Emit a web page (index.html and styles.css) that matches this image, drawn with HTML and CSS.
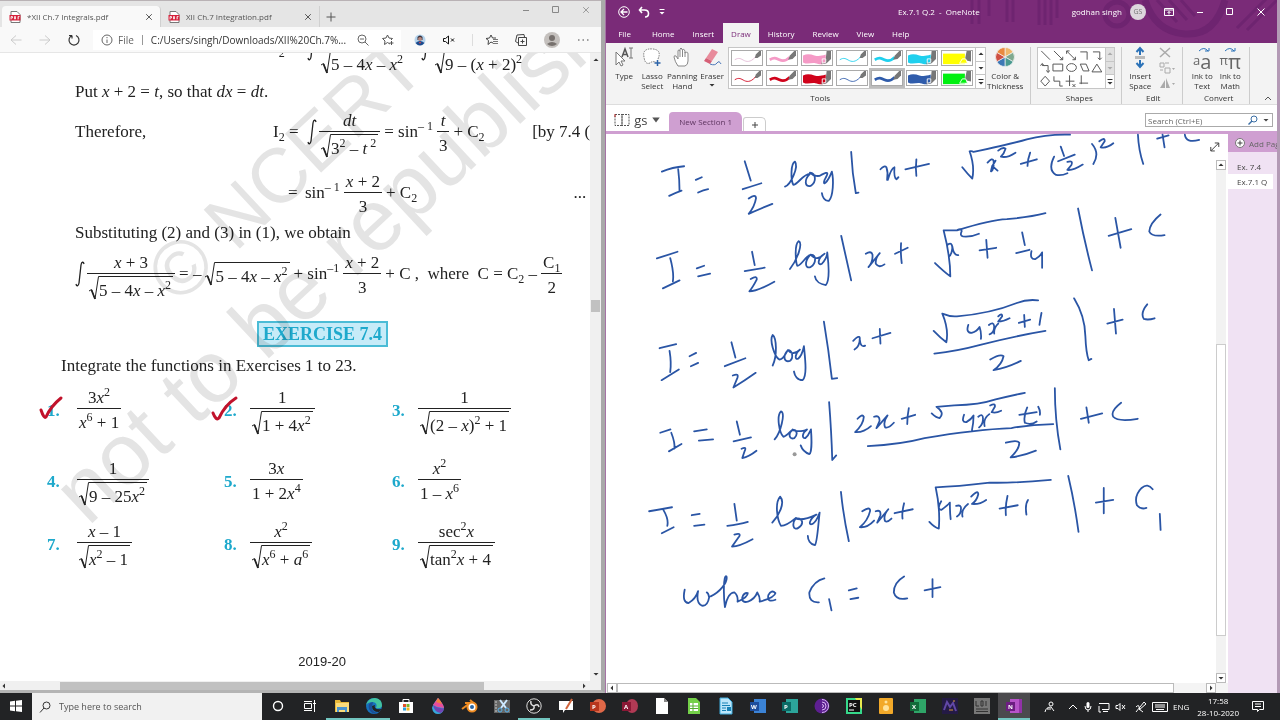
FILE: index.html
```html
<!DOCTYPE html>
<html lang="en">
<head>
<meta charset="utf-8">
<title>Ex.7.1 Q.2 - OneNote</title>
<link rel="stylesheet" href="styles.css">
</head>
<body>
<svg class="defs" aria-hidden="true">
  <symbol id="pdf" viewBox="0 0 12 12"><path d="M2 .5h6L11 3.500V11.500H2z" fill="#fff" stroke="#777"/><path d="M.5 4h11v5.500H.5z" fill="#d6203a"/><path d="M2 8.500v-3h1.500v1.500H2M5.500 5.500v2.500h1V5.500zM9 8.500v-3h1.500M9 7h1" fill="none" stroke="#fff" stroke-width=".8"/></symbol>
  <symbol id="x" viewBox="0 0 10 10"><path d="M1.500 1.500l7 7M8.500 1.500l-7 7" fill="none" stroke="currentColor"/></symbol>
  <symbol id="root" viewBox="0 0 10 24" preserveAspectRatio="none"><path d="M0 15l2.500-1.500L6 23 9.500.5H10" fill="none" stroke="#222"/><path d="M2.500 14L6 23" stroke="#222" stroke-width="1.700"/></symbol>
  <symbol id="integral" viewBox="0 0 10 28"><path d="M9 4C8.500 1.500 6.500 1.500 6 5L4 23c-.5 3.500-2.500 3.500-3 1" fill="none" stroke="#222" stroke-width="1.300"/></symbol>
  <symbol id="fine" viewBox="0 0 32 16"><path d="M2 10c5-3 7-1 11 1s9 1 14-6" fill="none" stroke="currentColor" stroke-width="1"/><path d="M32 0v5l-4 3-3 0 1-4 4-4z" fill="#777"/></symbol>
  <symbol id="medium" viewBox="0 0 32 16"><path d="M2 10c5-3 7-2 11 0s8 1 12-3" fill="none" stroke="currentColor" stroke-width="3"/><path d="M32 0v5l-4 4-5 1 2-5 5-5z" fill="#777"/></symbol>
  <symbol id="broad" viewBox="0 0 32 16"><path d="M0 5c5-2 9-1 13 0s7 1 13-1v10c-5 2-8 1-12 0s-9 2-14-1z" fill="currentColor"/><path d="M32 0v9l-5 5-6 1 1-6h4l1-9z" fill="#777"/><path d="M22 9h4v4l-4 1z" fill="currentColor" stroke="#fff"/></symbol>
  <symbol id="marker" viewBox="0 0 32 16"><path d="M0 3h25v12H0z" fill="currentColor"/><path d="M27 0h5v12l-4-1-3-1z" fill="#777"/><path d="M19 14l3-5h4l2 5z" fill="currentColor" stroke="#fff"/></symbol>
  <symbol id="down" viewBox="0 0 8 8"><path d="M1.500 3h5L4 5.500z" fill="currentColor"/></symbol>
  <symbol id="up" viewBox="0 0 8 8"><path d="M1.500 5h5L4 2.500z" fill="currentColor"/></symbol>
  <symbol id="left" viewBox="0 0 8 8"><path d="M5 1.500v5L2.500 4z" fill="currentColor"/></symbol>
  <symbol id="right" viewBox="0 0 8 8"><path d="M3 1.500v5L5.500 4z" fill="currentColor"/></symbol>
  <symbol id="more" viewBox="0 0 8 8"><path d="M1.500 1.500h5" stroke="currentColor"/><path d="M1.500 4h5L4 6.500z" fill="currentColor"/></symbol>
</svg>

<main class="desktop">
<section class="browser" aria-label="Browser">
  <header class="tabs">
    <div class="tab tab-on"><svg class="i12"><use href="#pdf"/></svg><span class="tab-title">*XII Ch.7 Integrals.pdf</span><button class="plain" aria-label="Close tab"><svg class="i8"><use href="#x"/></svg></button></div>
    <div class="tab"><svg class="i12"><use href="#pdf"/></svg><span class="tab-title">XII Ch.7 Integration.pdf</span><button class="plain" aria-label="Close tab"><svg class="i8"><use href="#x"/></svg></button></div>
    <button class="plain newtab" aria-label="New tab"><svg class="i10" viewBox="0 0 10 10"><path d="M5 .5v9M.5 5h9" stroke="#555"/></svg></button>
    <div class="winbtns">
      <button class="plain" aria-label="Minimize"><svg class="i8" viewBox="0 0 8 8"><path d="M1 4.500h6" stroke="#888"/></svg></button>
      <button class="plain" aria-label="Maximize"><svg class="i8" viewBox="0 0 8 8"><path d="M.5.5h6v6h-6z" fill="none" stroke="#888"/></svg></button>
      <button class="plain" aria-label="Close"><svg class="i8"><use href="#x"/></svg></button>
    </div>
  </header>
  <div class="address">
    <div class="nav">
      <button class="plain" aria-label="Back"><svg class="i12" viewBox="0 0 12 12"><path d="M11.500 6H1M6 1.500L1 6l5 4.500" fill="none" stroke="#ccc"/></svg></button>
      <button class="plain" aria-label="Forward"><svg class="i12" viewBox="0 0 12 12"><path d="M.5 6H11M6 1.500L11 6l-5 4.500" fill="none" stroke="#ccc"/></svg></button>
      <button class="plain" aria-label="Refresh"><svg class="i12" viewBox="0 0 12 12"><path d="M4 1.500a5 5 0 1 0 4 0M4 1.500H1M4 1.500v3" fill="none" stroke="#333" stroke-width="1.200"/></svg></button>
    </div>
    <div class="urlbox">
      <svg class="i12" viewBox="0 0 12 12"><circle cx="6" cy="6" r="5" fill="none" stroke="#666"/><path d="M6 5.500V9M6 3v1.200" stroke="#666"/></svg>
      <label for="url">File</label>
      <input id="url" type="text" value="C:/Users/singh/Downloads/XII%20Ch.7%...">
      <button class="plain" aria-label="Zoom out"><svg class="i12" viewBox="0 0 12 12"><circle cx="5" cy="5" r="4" fill="none" stroke="#666"/><path d="M8 8l3.500 3.500M3 5h4" stroke="#666"/></svg></button>
      <button class="plain star" aria-label="Add to favourites"><svg class="i12" viewBox="0 0 12 12"><path d="M8 10L5.500 8.500 2.500 10.500 3 7 .5 4.500 4 4l1.500-3L7 4l3.500.5L9 6M9.500 7v4M7.500 9h4" fill="none" stroke="#555"/></svg></button>
    </div>
    <div class="extras">
      <button class="plain" aria-label="Extension"><svg class="i12" viewBox="0 0 12 12"><circle cx="6" cy="6" r="5.500" fill="#b5d3ec"/><path d="M3.500 6V3Q6 0 8.500 3v3z" fill="#35303c"/><circle cx="6" cy="5" r="2" fill="#b9867a"/><path d="M1.500 9Q6 5 10.500 9 6 14 1.500 9" fill="#1b4b8e"/><path d="M5 8h2l-1 2z" fill="#e44"/></svg></button>
      <button class="plain" aria-label="Mute"><svg class="i12" viewBox="0 0 12 12"><path d="M.5 4.500h2l3-2.500v8l-3-2.500h-2zM8 4.500l3 3M11 4.500l-3 3" fill="none" stroke="#111"/></svg></button>
      <button class="plain rule" aria-label="Favourites"><svg class="i12" viewBox="0 0 12 12"><path d="M7 9L5 8l-3 2.500.5-4L0 4.500 3.500 4 5 1l1.500 3H10" fill="none" stroke="#444"/><path d="M7 5.500h5M7 7.500h5M7 9.500h5" stroke="#777"/></svg></button>
      <button class="plain" aria-label="Collections"><svg class="i12" viewBox="0 0 12 12"><path d="M3.500 3.500h8v8h-8zM3 9L.5 7.500 2 1l7-.5.5 2.500M7.500 5.500v4M5.500 7.500h4" fill="none" stroke="#444"/></svg></button>
      <button class="plain" aria-label="Profile"><svg class="i16" viewBox="0 0 16 16"><circle cx="8" cy="8" r="8" fill="#c4c0bd"/><circle cx="8" cy="6" r="3" fill="#77716e"/><path d="M3 12q5-4 10 0-5 4-10 0" fill="#77716e"/></svg></button>
      <button class="plain" aria-label="Settings and more"><svg class="i12" viewBox="0 0 12 12"><path d="M1 6h1.500M5.500 6H7M10 6h1.500" stroke="#444" stroke-width="1.200"/></svg></button>
    </div>
  </div>

  <div class="viewer">
    <article class="page">
      <div class="row first"><span class="lead">Now consider</span><span class="eq-start">I<sub>2</sub> =</span><svg class="int"><use href="#integral"/></svg><span class="frac"><span class="num"><i>dx</i></span><span class="den"><span class="rad"><svg class="root"><use href="#root"/></svg><span class="radicand">5 – 4<i>x</i> – <i>x</i><sup>2</sup></span></span></span></span><svg class="int second"><use href="#integral"/></svg><span class="frac"><span class="num"><i>dx</i></span><span class="den"><span class="rad"><svg class="root"><use href="#root"/></svg><span class="radicand">9 – (<i>x</i> + 2)<sup>2</sup></span></span></span></span></div>
      <div class="row put"><p>Put <i>x</i> + 2 = <i>t</i>, so that <i>dx</i> = <i>dt</i>.</p></div>
      <div class="row there"><span class="lead">Therefore,</span><span class="eq-start">I<sub>2</sub> =</span><svg class="int"><use href="#integral"/></svg><span class="frac"><span class="num"><i>dt</i></span><span class="den"><span class="rad"><svg class="root"><use href="#root"/></svg><span class="radicand">3<sup>2</sup> – <i>t</i><sup> 2</sup></span></span></span></span><span class="op">= sin<sup>– 1</sup></span><span class="frac"><span class="num"><i>t</i></span><span class="den">3</span></span><span class="op">+ C<sub>2</sub></span><span class="by">[by 7.4 (</span></div>
      <div class="row sinrow"><span class="eq">=</span><span class="op first-op">sin<sup>– 1</sup></span><span class="frac"><span class="num"><i>x</i> + 2</span><span class="den">3</span></span><span class="op">+ C<sub>2</sub></span><span class="dots">...</span></div>
      <div class="row subst"><p>Substituting (2) and (3) in (1), we obtain</p></div>
      <div class="row result"><svg class="int"><use href="#integral"/></svg><span class="frac"><span class="num"><i>x</i> + 3</span><span class="den"><span class="rad"><svg class="root"><use href="#root"/></svg><span class="radicand">5 – 4<i>x</i> – <i>x</i><sup>2</sup></span></span></span></span><span class="op">= –</span><span class="rad solo"><svg class="root"><use href="#root"/></svg><span class="radicand">5 – 4<i>x</i> – <i>x</i><sup>2</sup></span></span><span class="op">+ sin<sup>–1</sup></span><span class="frac"><span class="num"><i>x</i> + 2</span><span class="den">3</span></span><span class="op">+ C ,&nbsp; where &nbsp;C = C<sub>2</sub> –</span><span class="frac"><span class="num">C<sub>1</sub></span><span class="den">2</span></span></div>
      <h2 class="exercise">EXERCISE 7.4</h2>
      <p class="instruct">Integrate the functions in Exercises 1 to 23.</p>
      <ol class="problems">
        <li><b>1.</b><span class="frac"><span class="num">3<i>x</i><sup>2</sup></span><span class="den"><i>x</i><sup>6</sup> + 1</span></span><svg class="tick" viewBox="0 0 24 26"><path d="M2 14Q5 23 7 21 12 10 22 2" fill="none" stroke="#c1122b" stroke-width="3" stroke-linecap="round"/></svg></li>
        <li><b>2.</b><span class="frac"><span class="num">1</span><span class="den"><span class="rad"><svg class="root"><use href="#root"/></svg><span class="radicand">1 + 4<i>x</i><sup>2</sup></span></span></span></span><svg class="tick far" viewBox="0 0 24 26"><path d="M1 17Q4 25 7 22 13 9 24 2" fill="none" stroke="#c1122b" stroke-width="3" stroke-linecap="round"/></svg></li>
        <li><b>3.</b><span class="frac"><span class="num">1</span><span class="den"><span class="rad"><svg class="root"><use href="#root"/></svg><span class="radicand">(2 – <i>x</i>)<sup>2</sup> + 1</span></span></span></span></li>
        <li><b>4.</b><span class="frac"><span class="num">1</span><span class="den"><span class="rad"><svg class="root"><use href="#root"/></svg><span class="radicand">9 – 25<i>x</i><sup>2</sup></span></span></span></span></li>
        <li><b>5.</b><span class="frac"><span class="num">3<i>x</i></span><span class="den">1 + 2<i>x</i><sup>4</sup></span></span></li>
        <li><b>6.</b><span class="frac"><span class="num"><i>x</i><sup>2</sup></span><span class="den">1 – <i>x</i><sup>6</sup></span></span></li>
        <li><b>7.</b><span class="frac"><span class="num"><i>x</i> – 1</span><span class="den"><span class="rad"><svg class="root"><use href="#root"/></svg><span class="radicand"><i>x</i><sup>2</sup> – 1</span></span></span></span></li>
        <li><b>8.</b><span class="frac"><span class="num"><i>x</i><sup>2</sup></span><span class="den"><span class="rad"><svg class="root"><use href="#root"/></svg><span class="radicand"><i>x</i><sup>6</sup> + <i>a</i><sup>6</sup></span></span></span></span></li>
        <li><b>9.</b><span class="frac"><span class="num">sec<sup>2</sup><i>x</i></span><span class="den"><span class="rad"><svg class="root"><use href="#root"/></svg><span class="radicand">tan<sup>2</sup><i>x</i> + 4</span></span></span></span></li>
      </ol>
      <footer class="folio">2019-20</footer>
      <svg class="watermark" viewBox="0 53 590 628" aria-hidden="true"><text transform="translate(178 306) rotate(-43)" font-size="77">© NCERT</text><text transform="translate(88 527) rotate(-43)" font-size="87">not to be republished</text></svg>
    </article>
    <div class="vbar"><svg class="i8"><use href="#up"/></svg><span class="vtrack"><span class="vthumb"></span></span><svg class="i8"><use href="#down"/></svg></div>
  </div>
  <div class="hbar"><svg class="i8"><use href="#left"/></svg><span class="htrack"><span class="hthumb"></span></span><svg class="i8"><use href="#right"/></svg></div>
</section>

<section class="note" aria-label="OneNote">
  <header class="title">
    <svg class="deco" viewBox="0 0 320 43" preserveAspectRatio="xMaxYMin slice" aria-hidden="true"><g fill="none" stroke="#6e2470"><path d="M15 0v24M22 0v24M32 0v16M50 0v22M56 0v22M82 0v25M88 0v25M94 0v25M100 0v18" stroke-width="3"/><circle cx="160" cy="14" r="12" stroke-width="5"/><path d="M188 0q10 32 40 34t40-34" stroke-width="7"/><path d="M200 0l20 22M212 0l18 20M224 0l14 16M280 28l30-30M290 30l30-30" stroke-width="3"/></g></svg>
    <div class="quick">
      <button class="plain" aria-label="Back"><svg class="i12" viewBox="0 0 12 12"><circle cx="6" cy="6" r="5.300" fill="none" stroke="#fff"/><path d="M9.500 6H3M6 3L3 6l3 3" fill="none" stroke="#fff" stroke-width="1.300"/></svg></button>
      <button class="plain" aria-label="Undo"><svg class="i12" viewBox="0 0 12 12"><path d="M4 1L1.500 4 4 7M1.500 4h5q4 0 4 3.500T7 11" fill="none" stroke="#fff" stroke-width="1.600"/></svg></button>
      <button class="plain" aria-label="Customize"><svg class="i8"><use href="#more"/></svg></button>
    </div>
    <h1>Ex.7.1 Q.2&nbsp; -&nbsp; OneNote</h1>
    <div class="account"><span>godhan singh</span><span class="initials">GS</span></div>
    <div class="controls">
      <button class="plain" aria-label="Ribbon display"><svg class="i10" viewBox="0 0 10 10"><path d="M.5 1.500h9v7h-9zM.5 3h9M5 7.500V4.500M3.500 6L5 4.500 6.500 6" fill="none" stroke="#fff"/></svg></button>
      <button class="plain" aria-label="Minimize"><svg class="i8" viewBox="0 0 8 8"><path d="M1 4.500h6" stroke="#fff"/></svg></button>
      <button class="plain" aria-label="Maximize"><svg class="i8" viewBox="0 0 8 8"><path d="M.5.5h6v6h-6z" fill="none" stroke="#fff"/></svg></button>
      <button class="plain" aria-label="Close"><svg class="i10"><use href="#x"/></svg></button>
    </div>
    <nav class="menu"><button>File</button><button>Home</button><button>Insert</button><button class="on">Draw</button><button>History</button><button>Review</button><button>View</button><button>Help</button></nav>
  </header>

  <div class="ribbon">
    <div class="group tools">
      <div class="items">
        <button class="big w28"><svg class="i20" viewBox="0 0 20 20"><path d="M2 5v13l3-3 2 4 2-1-2-4h4z" fill="#fff" stroke="#777"/><path d="M8 10l3-8 3 8M9 7.500h4" fill="none" stroke="#555" stroke-width="1.500"/><path d="M15 1h4M17 1v10M15 11h4" stroke="#777" fill="none"/></svg>Type</button>
        <button class="big w28"><svg class="i20" viewBox="0 0 20 20"><path d="M16 12Q20 3 11 2 0 1 2 10q1 8 6 6 2-2 6-1" fill="#fff" stroke="#777" stroke-dasharray="1.500 1"/><path d="M15.500 13v6M12.500 16h6" stroke="#2b63a8" stroke-width="1.500"/></svg>Lasso<br>Select</button>
        <button class="big w34"><svg class="i20" viewBox="0 0 20 20"><path d="M6 19Q3 15 2 10q0-2 2-1l2 3V4q0-2 2 0V2q1-2 2 0v1q2-2 3 1v2q3-2 3 1v7q0 4-3 5zM8 4v6M10.500 3v7M13 5v5" fill="#fff" stroke="#888"/></svg>Panning<br>Hand</button>
        <button class="big w28"><svg class="i20" viewBox="0 0 20 20"><path d="M10 2l6 3-6 9-6-3z" fill="#e88b9b"/><path d="M4 11l6 3-2 3-6-3z" fill="#d65f76"/><path d="M8 17q5 2 7-1t4 1" fill="none" stroke="#4a76b8"/></svg>Eraser<svg class="i8"><use href="#down"/></svg></button>
        <div class="gallery">
          <div class="pens">
            <button class="pen pale"><svg><use href="#fine"/></svg></button><button class="pen pink"><svg><use href="#medium"/></svg></button><button class="pen pink"><svg><use href="#broad"/></svg></button><button class="pen cyan"><svg><use href="#fine"/></svg></button><button class="pen cyan"><svg><use href="#medium"/></svg></button><button class="pen cyan"><svg><use href="#broad"/></svg></button><button class="pen yellow"><svg><use href="#marker"/></svg></button>
            <button class="pen red"><svg><use href="#fine"/></svg></button><button class="pen red"><svg><use href="#medium"/></svg></button><button class="pen red"><svg><use href="#broad"/></svg></button><button class="pen blue"><svg><use href="#fine"/></svg></button><button class="pen blue picked"><svg><use href="#medium"/></svg></button><button class="pen blue"><svg><use href="#broad"/></svg></button><button class="pen green"><svg><use href="#marker"/></svg></button>
          </div>
          <div class="spin"><button aria-label="Up"><svg class="i8"><use href="#up"/></svg></button><button aria-label="Down"><svg class="i8"><use href="#down"/></svg></button><button aria-label="More"><svg class="i8"><use href="#more"/></svg></button></div>
        </div>
        <button class="big w38"><svg class="i20" viewBox="-10 -10 20 20"><g stroke="#f3f3f3" stroke-width=".7"><path d="M0 0V-9.500A9.500 9.500 0 0 1 8.200-4.700z" fill="#efb76b"/><path d="M0 0L8.200-4.700A9.500 9.500 0 0 1 8.200 4.700z" fill="#7fa98f"/><path d="M0 0L8.200 4.700A9.500 9.500 0 0 1 0 9.500z" fill="#4a9a90"/><path d="M0 0V9.500A9.500 9.500 0 0 1-8.200 4.700z" fill="#3d78b5"/><path d="M0 0L-8.200 4.700A9.500 9.500 0 0 1-8.200-4.700z" fill="#cf4f42"/><path d="M0 0L-8.200-4.700A9.500 9.500 0 0 1 0-9.500z" fill="#e9893f"/></g></svg>Color &amp;<br>Thickness</button>
      </div>
      <div class="caption">Tools</div>
    </div>
    <div class="group shapes">
      <div class="items"><div class="shapebox">
        <svg viewBox="0 0 68 41" aria-label="Shapes"><g fill="none" stroke="#555"><path d="M3 3l9 9M16 3l9 9M25 9v3h-3M29 3l9 9M29 6V3h3M38 9v3h-3M43 4h7v8M56 4h7v8M61 10l2 2 2-2M4 16v2h6v7M8 23l2 2 2-2M2 18l2-2 2 2M15 16.500h10v7H15zM43 16.500h6l3 7h-6zM60 16.500l5 8H55zM7 29l4.500 5L7 39l-4.500-5zM16 29v5h6v5h3M32 28v11M28 34h9M44 28v9M42 36h9M35 37l3 3M38 37l-3 3"/><ellipse cx="34" cy="20" rx="5" ry="4"/></g></svg>
        <div class="spin"><button aria-label="Up" disabled><svg class="i8"><use href="#up"/></svg></button><button aria-label="Down" disabled><svg class="i8"><use href="#down"/></svg></button><button aria-label="More"><svg class="i8"><use href="#more"/></svg></button></div>
      </div></div>
      <div class="caption">Shapes</div>
    </div>
    <div class="group edit">
      <div class="items">
        <button class="big w34"><svg class="i20" viewBox="0 0 20 20"><path d="M5 9h10v3H5z" fill="#bbb"/><path d="M10 8V2M6.500 5L10 1l3.500 4M10 13v6M6.500 16L10 20l3.500-4" fill="none" stroke="#2b72b8" stroke-width="2"/></svg>Insert<br>Space</button>
        <div class="mini"><svg class="i12" viewBox="0 0 12 12"><path d="M1 1l10 9M11 1L1 10" stroke="#aaa" stroke-width="1.500"/></svg><svg class="i16" viewBox="0 0 16 12"><path d="M1 1h4v4H1zM6 6h5v5H6zM6 1h4M1 8h3" fill="none" stroke="#aaa"/><path d="M13 6h3l-1.500 2z" fill="#aaa"/></svg><svg class="i16" viewBox="0 0 16 12"><path d="M1 11L6 3v8zM7 11V1l4 10z" fill="#aaa"/><path d="M13 6h3l-1.500 2z" fill="#aaa"/></svg></div>
      </div>
      <div class="caption">Edit</div>
    </div>
    <div class="group convert">
      <div class="items">
        <button class="big w28"><span class="glyph"><small>a</small>a<svg viewBox="0 0 12 6"><path d="M1 4Q6-1 10 4M7 4h4V1" fill="none" stroke="#2b72b8"/></svg></span>Ink to<br>Text</button>
        <button class="big w28"><span class="glyph"><small>π</small>π<svg viewBox="0 0 12 6"><path d="M1 4Q6-1 10 4M7 4h4V1" fill="none" stroke="#2b72b8"/></svg></span>Ink to<br>Math</button>
      </div>
      <div class="caption">Convert</div>
    </div>
    <button class="plain collapse" aria-label="Collapse ribbon"><svg class="i8" viewBox="0 0 8 8"><path d="M1 6l3-3 3 3" fill="none" stroke="#555"/></svg></button>
  </div>

  <div class="sections">
    <button class="book"><svg class="i16" viewBox="0 0 16 14"><path d="M1 1.500h7v11H1zM8 1.500h7v11H8z" fill="#fff" stroke="#555" stroke-dasharray="2 1"/><path d="M1 1v3" stroke="#b22"/></svg><span>gs</span><svg class="i10" viewBox="0 0 8 8"><path d="M1 2h6L4 6z" fill="#555"/></svg></button>
    <button class="sec">New Section 1</button>
    <button class="addsec" aria-label="Add section"><svg class="i8" viewBox="0 0 8 8"><path d="M4 1v6M1 4h6" stroke="#444"/></svg></button>
    <div class="search"><input type="text" aria-label="Search" placeholder="Search (Ctrl+E)"><svg class="i10" viewBox="0 0 10 10"><circle cx="6" cy="4" r="3" fill="none" stroke="#3a6ea5"/><path d="M4 6L.5 9.500" stroke="#3a6ea5" stroke-width="1.500"/></svg><svg class="i8"><use href="#down"/></svg></div>
  </div>

  <div class="work">
    <div class="sheet">
      <svg class="ink" viewBox="605 134 611 548" preserveAspectRatio="xMinYMin meet" role="img" aria-label="Handwritten working for the integral">
        <g transform="translate(600 130) scale(.33333)">
          <path d="M183 125Q215 112 250 109M232 118Q236 150 236 182M205 198Q220 190 242 182M285 150L303 142M292 188Q308 180 322 178M432 94L450 152M426 178Q450 170 482 160M444 206Q465 190 466 205 462 230 444 252 470 240 515 222"/>
          <path d="M553 170C570 165 595 110 583 95 570 100 570 150 578 165 590 165 610 130 628 132 610 150 612 172 630 168 650 155 645 130 628 128 640 140 655 140 662 135 690 120 680 135 672 150 665 170 680 160 694 125 700 150 698 200 685 213 672 215 665 200 664 190M752 66Q755 130 766 190L774 188M840 118Q852 105 858 112 864 130 860 150M862 150Q872 115 882 112 880 145 888 148L894 142M915 118Q950 110 986 102M948 88Q945 115 948 138"/>
          <path d="M168 386L230 366M208 385Q220 430 216 455M186 476L236 452M288 416L310 408M292 440L328 432M454 366L462 406M432 424L492 414M450 448Q470 435 468 450 455 475 446 485 470 485 521 456"/>
          <path d="M568 418C590 390 608 340 594 334 580 345 586 400 590 408 600 410 615 380 628 376 612 395 612 418 630 412 648 400 648 375 630 375 645 392 660 385 672 372 650 385 650 410 664 402 675 390 680 375 680 368 684 400 690 450 676 466 660 464 645 455 643 440M722 318L752 452M796 372Q812 362 816 374 818 398 804 412L838 370Q824 385 826 402 836 416 852 404M884 372L922 354M902 340Q900 370 904 400"/>
          <path d="M176 656L226 644M206 664Q212 700 208 728M182 752L234 720M266 680L286 670M270 710L292 700M392 638L404 684M372 710L434 686M396 738Q415 730 410 745L398 774Q430 755 465 730"/>
          <path d="M516 708C530 680 528 625 516 616 506 630 520 680 536 690 550 690 555 670 562 662 545 680 550 700 568 694 580 684 575 662 562 662 572 675 585 672 598 660 585 670 580 690 592 688 602 680 608 660 610 650 614 690 620 740 606 752 590 752 582 738 580 726M670 576Q684 660 694 748L710 746M758 634Q775 615 778 625 778 650 762 660M778 630Q780 655 794 648M816 626L870 610M838 598L840 642"/>
        </g>
        <g transform="translate(930 130) scale(.33333)">
          <path d="M96 112Q110 130 126 146 134 110 118 64 124 62 130 66 250 40 290 28 350 12 420 14M172 98Q186 82 190 92 192 115 184 124M196 92Q184 108 182 124M186 108L202 122M204 62Q218 50 226 56 222 70 212 80 230 85 256 68M272 102L320 88M300 68Q292 90 292 108M372 80Q352 120 378 135 395 138 412 130M392 50L402 78M384 94L434 74M412 96Q430 90 424 105L412 120Q430 122 458 104M486 42Q510 70 490 102M508 34Q525 20 524 34L512 52Q530 56 550 40M624 14Q626 60 640 102M682 26L716 16M698 14L704 52M765 14Q768 40 808 30"/>
          <path d="M14 400Q40 425 60 440 60 380 40 302L80 302Q180 270 230 268 300 262 346 250M82 300Q95 295 94 305 88 318 98 320 125 322 146 312M52 345Q66 335 66 355 64 375 56 380M66 350Q70 378 84 376M148 362L198 354M168 330L172 384M276 308L284 346M258 370L298 360M304 364Q298 390 316 388 330 380 336 368V414M444 236Q462 330 486 422M536 318Q570 308 604 298M556 264L572 354M692 254Q660 280 658 305 665 322 704 316"/>
          <path d="M10 604Q30 625 48 638 56 600 36 552 60 562 80 560 180 552 260 520 290 508 324 512M114 586Q106 610 124 610 140 605 148 592 154 610 152 628M176 586Q190 575 192 590 192 610 178 614M204 582Q190 595 192 612M204 560Q216 548 216 560L204 576Q220 576 238 566M266 580L300 570M282 556L284 592M334 550Q330 570 328 586M12 672Q80 665 150 646 250 620 346 604M180 690Q210 672 220 680 215 705 190 722 230 715 272 694M432 506Q465 560 466 620 468 670 476 692L484 688M532 582L578 570M552 538L558 612M652 524Q630 550 642 568 655 572 674 566"/>
        </g>
        <g transform="translate(600 380) scale(.39542 .33333)">
          <path d="M150 160L176 150M178 160Q188 190 186 208M172 216L204 194M236 156L268 150M248 184L284 180M344 126L352 166M336 186L380 174M356 208Q370 200 364 215L358 236Q375 232 394 214"/>
          <path d="M440 180C455 160 468 100 456 96 444 110 452 160 462 172 470 172 480 155 486 150 472 165 478 182 490 176 500 165 496 150 486 152 500 158 515 155 522 150 510 160 508 178 518 176 526 168 530 155 532 150 534 180 534 220 528 224 518 220 510 212 506 198M578 68Q584 160 586 242L596 228M650 118Q662 102 666 112 665 135 644 158 665 160 684 140M692 112Q706 106 706 124L698 146 726 108Q714 128 720 144 728 148 742 130M762 118L796 106M780 86Q776 110 776 134M838 102Q850 116 858 116 872 100 850 82L895 78Q960 76 1000 60 1040 48 1074 40M920 106Q912 130 926 128 938 120 944 108 944 130 940 152M956 112Q968 100 968 118 968 136 958 144M984 104Q968 118 972 140M986 78Q1000 70 998 82L990 98Q1000 102 1014 94M1060 106L1104 98M1080 84Q1070 110 1074 130 1090 138 1104 126M1108 82Q1114 95 1112 106M676 200Q760 195 820 176 950 150 1040 146 1090 135 1146 134M1150 26Q1150 120 1164 210M1026 190Q1055 180 1060 190 1060 210 1038 234 1070 230 1102 214M1216 118L1270 102M1230 84L1236 130M1318 70Q1290 95 1298 112 1310 128 1360 118"/>
          <path d="M122 396L180 384M158 392Q172 420 168 440M154 462L184 444M230 408L250 404M236 440L262 436M338 374L344 424M320 440Q350 436 372 428M338 466Q356 460 350 472L332 502Q350 502 384 480"/>
          <path d="M434 430C450 410 468 370 454 352 440 370 446 420 456 440 470 440 485 425 494 416 482 435 488 455 500 446 515 435 512 415 494 418 510 425 530 415 546 406 528 420 524 440 536 434 548 425 552 405 554 400 550 440 548 490 542 498 530 495 524 482 524 470M608 338Q614 410 628 486M662 396Q682 380 682 395 676 425 656 444 675 446 692 424M696 396Q710 390 708 408L700 430 728 390Q714 410 720 426 726 430 736 418M744 402L790 390M768 372Q762 400 764 418M832 428Q845 445 856 448 860 390 848 324 900 322 985 310 1040 312 1140 302M862 366Q850 390 862 392 878 380 884 370 884 400 886 420M900 380Q914 375 912 390 912 405 902 412M930 374Q912 390 916 412M938 352Q956 330 956 345 952 365 940 374 960 376 976 362M1010 388L1056 378M1030 350Q1024 380 1026 408M1082 362Q1074 375 1078 406M1184 290Q1200 370 1210 458M1254 370L1298 362M1274 326V402M1398 330Q1385 310 1370 326 1350 350 1358 378 1368 392 1382 386M1416 404L1418 452"/>
          <path d="M212 632Q205 670 222 672 240 660 246 636 240 672 256 680 270 682 274 655 272 642 268 640M278 652C300 640 322 610 318 592 310 585 310 650 314 684Q322 640 338 640 348 650 346 668 372 655 372 642 362 640 358 655 356 672 372 668 390 660 396 640 404 655 402 668 440 655 442 642 432 630 424 648 420 672 442 662M566 598Q540 605 528 640 526 672 552 670M578 660L584 694M628 634L648 628M632 660L652 656M768 592Q742 610 742 640 748 665 776 658M820 634L860 624M840 600V654"/>
        </g>
        <circle cx="794" cy="455" r="2" fill="#999"/>
        <path class="expand" d="M1211 151l8-8M1215 143h4v4M1211 147v4h4"/>
      </svg>
    </div>
    <div class="nvbar"><svg class="i10 boxed"><use href="#up"/></svg><span class="nvtrack"><span class="nvthumb"></span></span><svg class="i10 boxed"><use href="#down"/></svg></div>
    <aside class="pages">
      <button class="addpage"><svg class="i10" viewBox="0 0 10 10"><circle cx="5" cy="5" r="4.500" fill="#fff" stroke="#777"/><path d="M5 2.500v5M2.500 5h5" stroke="#444"/></svg>Add Page</button>
      <a href="#p1">Ex. 7.4</a>
      <a href="#p2" class="current">Ex.7.1 Q</a>
    </aside>
    <div class="nhbar"><svg class="i10 boxed"><use href="#left"/></svg><span class="nhthumb"></span><svg class="i10 boxed"><use href="#right"/></svg></div>
  </div>
</section>
</main>

<footer class="taskbar">
  <button class="slot" aria-label="Start"><svg class="i12" viewBox="0 0 12 12"><path d="M0 1.500l5-.7v4.700H0zM6 .7L12 0v5.500H6zM0 6.500h5v4.700l-5-.7zM6 6.500h6V12l-6-.7z" fill="#fff"/></svg></button>
  <label class="find"><svg class="i12" viewBox="0 0 12 12"><circle cx="7.500" cy="4.500" r="3.500" fill="none" stroke="#333"/><path d="M5 7L1 11.500" stroke="#333"/></svg><input type="text" aria-label="Search" placeholder="Type here to search"></label>
  <button class="slot" aria-label="Cortana"><svg class="i12" viewBox="0 0 12 12"><circle cx="6" cy="6" r="4.500" fill="none" stroke="#fff" stroke-width="1.400"/></svg></button>
  <button class="slot" aria-label="Task view"><svg class="i12" viewBox="0 0 12 12"><path d="M.5 3.500h7v5h-7zM0 1.500h8M0 10.500h8M10.500 0v12M9 3.500h3" fill="none" stroke="#fff"/></svg></button>
  <button class="slot open" aria-label="Explorer"><svg class="i16" viewBox="0 0 16 16"><path d="M1 2h5l1 2h8v10H1z" fill="#e8b839"/><path d="M2 5h13v9H2z" fill="#fbdc7c"/><path d="M3 14v-5h10v5h-2v-2H5v2z" fill="#4a94cf"/></svg></button>
  <button class="slot open" aria-label="Edge"><svg class="i16" viewBox="0 0 16 16"><circle cx="8" cy="8" r="8" fill="#1671bd"/><path d="M0 7Q2 0 9 0q7 1 7 7 0 4-6 3 2-5-3-6-5 0-7 3" fill="#42c2a0"/><path d="M7 4Q1 5 3 11q3 6 9 4-7-1-6-7z" fill="#1b4f98"/><path d="M9 7q-2 5 7 4l-3 3Q6 14 6 8z" fill="#222"/></svg></button>
  <button class="slot" aria-label="Store"><svg class="i16" viewBox="0 0 16 16"><path d="M1 4h14v11H1z" fill="#fff"/><path d="M5 4V1.500h6V4" fill="none" stroke="#fff"/><path d="M5 6h3v3H5z" fill="#e5502a"/><path d="M8.500 6h3v3h-3z" fill="#7bb52b"/><path d="M5 9.500h3v3H5z" fill="#29a0dc"/><path d="M8.500 9.500h3v3h-3z" fill="#f4b51c"/></svg></button>
  <button class="slot" aria-label="Paint 3D"><svg class="i16" viewBox="0 0 16 16"><path d="M8 0q6 7 6 10-1 6-6 6T2 10Q3 6 8 0" fill="#35a8dd"/><path d="M8 0q6 7 6 10-6 0-11-3z" fill="#e94c9b"/><path d="M3 7q5 4 11 3 0 3-3 5Q4 14 3 7" fill="#7045b5"/><path d="M8 0q3 3 4 6L6 4z" fill="#f2803c"/></svg></button>
  <button class="slot" aria-label="Blender"><svg class="i16" viewBox="0 0 16 16"><path d="M0 11l8-6H3M8 2l6 5" fill="none" stroke="#ee8b22" stroke-width="2"/><circle cx="10" cy="9" r="4.500" fill="#fff" stroke="#ee8b22" stroke-width="2"/><circle cx="10" cy="9" r="2" fill="#2b66a5"/></svg></button>
  <button class="slot" aria-label="Video editor"><svg class="i16" viewBox="0 0 16 16"><path d="M0 2h16v13H0z" fill="#666"/><path d="M1 4h2M1 7h2M1 10h2M1 13h2" stroke="#ccc"/><path d="M6 2l6 8M13 2L7 10" stroke="#cde8ff" stroke-width="2"/><circle cx="6" cy="12" r="2" fill="none" stroke="#56b2ec"/><circle cx="13" cy="12" r="2" fill="none" stroke="#56b2ec"/></svg></button>
  <button class="slot open" aria-label="OBS"><svg class="i16" viewBox="0 0 16 16"><circle cx="8" cy="8" r="7.200" fill="#222" stroke="#ddd"/><path d="M8 8Q4 7 5 3M8 8q4-3 5 1M8 8q1 4-4 4" fill="none" stroke="#ddd" stroke-width="1.500"/></svg></button>
  <button class="slot" aria-label="Whiteboard"><svg class="i16" viewBox="0 0 16 16"><path d="M1 3h14v9H7l-2 3v-3H1z" fill="#fff"/><path d="M8 11l6-10" stroke="#d1633b" stroke-width="2"/></svg></button>
  <button class="slot" aria-label="PowerPoint"><svg class="i16" viewBox="0 0 16 16"><circle cx="9" cy="8" r="7" fill="#e06848"/><rect y="4" width="9" height="9" fill="#b7361d"/><text x="2" y="11" class="ltr">P</text></svg></button>
  <button class="slot" aria-label="Access"><svg class="i16" viewBox="0 0 16 16"><ellipse cx="10" cy="8" rx="6" ry="7" fill="#b13a55"/><rect y="4" width="9" height="9" fill="#8a1835"/><text x="2" y="11" class="ltr">A</text></svg></button>
  <button class="slot" aria-label="LibreOffice"><svg class="i16" viewBox="0 0 16 16"><path d="M2 0h8l4 4v12H2z" fill="#fff"/><path d="M10 0v4h4" fill="#888"/></svg></button>
  <button class="slot" aria-label="Calc"><svg class="i16" viewBox="0 0 16 16"><path d="M2 0h8l4 4v12H2z" fill="#74d049"/><path d="M4 5h8v8H4z" fill="#fff"/><path d="M4 8h8M4 10.500h8M7 5v8" stroke="#53ad30"/></svg></button>
  <button class="slot" aria-label="Writer"><svg class="i16" viewBox="0 0 16 16"><path d="M2 0h8l4 4v12H2z" fill="#bce6fa" stroke="#3baadc"/><path d="M4 5h6M4 7.500h8M4 10h4M4 12.500h4" stroke="#1681b5"/><path d="M9 9h4v4H9z" fill="#1681b5"/></svg></button>
  <button class="slot" aria-label="Word"><svg class="i16" viewBox="0 0 16 16"><rect x="4" y="1" width="12" height="14" fill="#3b83d6"/><rect y="4" width="9" height="9" fill="#1d4d9c"/><text x="1" y="11" class="ltr">W</text></svg></button>
  <button class="slot" aria-label="Publisher"><svg class="i16" viewBox="0 0 16 16"><rect x="4" y="1" width="12" height="14" fill="#2ca59b"/><rect y="4" width="9" height="9" fill="#0b6b66"/><text x="2" y="11" class="ltr">P</text></svg></button>
  <button class="slot" aria-label="Tor"><svg class="i16" viewBox="0 0 16 16"><circle cx="8" cy="8" r="7.500" fill="#5d1f91"/><path d="M8 1.500a6.500 6.500 0 0 1 0 13M8 4a4 4 0 0 1 0 8M8 6.500a1.500 1.500 0 0 1 0 3" fill="none" stroke="#d9b7f5"/></svg></button>
  <button class="slot" aria-label="PyCharm"><svg class="i16" viewBox="0 0 16 16"><path d="M0 0h16v16H0z" fill="#36d98b"/><path d="M9 0h7v12z" fill="#e9e94e"/><rect x="2" y="2" width="12" height="12" fill="#111"/><text x="3" y="9" class="ltr">PC</text><path d="M3 12h5" stroke="#fff"/></svg></button>
  <button class="slot" aria-label="Music"><svg class="i16" viewBox="0 0 16 16"><rect x="1" width="14" height="16" rx="1" fill="#f2a929"/><circle cx="8" cy="10" r="3" fill="#ffe39b"/><circle cx="8" cy="4" r="1.500" fill="#ffe39b"/></svg></button>
  <button class="slot" aria-label="Excel"><svg class="i16" viewBox="0 0 16 16"><rect x="4" y="1" width="12" height="14" fill="#2fa568"/><rect y="4" width="9" height="9" fill="#126b3a"/><text x="2" y="11" class="ltr">X</text></svg></button>
  <button class="slot" aria-label="Game"><svg class="i16" viewBox="0 0 16 16"><rect width="16" height="16" fill="#241a45"/><path d="M2 12l3-8 3 5 3-4 3 8" fill="none" stroke="#6248a7" stroke-width="2"/><path d="M7 12h4M11 3h2" stroke="#db9a3c"/></svg></button>
  <button class="slot" aria-label="Logisim"><svg class="i16" viewBox="0 0 16 16"><rect width="16" height="16" fill="#777"/><path d="M2 3v5h3M7 3h2v5H7zM12 3v5M2 11h12M2 13.500h12" fill="none" stroke="#333"/></svg></button>
  <button class="slot open active" aria-label="OneNote"><svg class="i16" viewBox="0 0 16 16"><rect x="4" y="1" width="12" height="14" fill="#b653c9"/><path d="M13 1h3v14h-3z" fill="#9332a8"/><rect y="4" width="9" height="9" fill="#6d1d82"/><text x="2" y="11" class="ltr">N</text></svg></button>
  <div class="tray">
    <svg class="i12" viewBox="0 0 12 12"><circle cx="7" cy="3" r="2" fill="none" stroke="#fff"/><path d="M1 11q1-5 6-5l3 4M3 8l4 0" fill="none" stroke="#fff"/></svg>
    <svg class="i10" viewBox="0 0 10 10"><path d="M1 7l4-4 4 4" fill="none" stroke="#fff"/></svg>
    <svg class="i10" viewBox="0 0 10 10"><rect x="3.500" width="3" height="6" rx="1.500" fill="#fff"/><path d="M2 4q0 4 3 4t3-4M5 8v2" fill="none" stroke="#fff"/></svg>
    <svg class="i12" viewBox="0 0 12 12"><path d="M1 2.500h10v6H4M1 5v6h2M5 10.500h5" fill="none" stroke="#fff"/></svg>
    <svg class="i12" viewBox="0 0 12 12"><path d="M1 4.500h2l2-2v7l-2-2H1zM7 4l3 4M10 4L7 8" fill="none" stroke="#fff"/></svg>
    <svg class="i12 gap" viewBox="0 0 12 12"><path d="M1 11L9 1l2 2-7 6M1 6q3-3 3 0t4 5" fill="none" stroke="#fff"/></svg>
    <svg class="i16" viewBox="0 0 16 12"><path d="M.5 1.500h15v9H.5zM3 4h10M3 6h10M4 8.500h8" fill="none" stroke="#fff"/></svg>
    <span>ENG</span>
    <time class="clock">17:58<br>28-10-2020</time>
    <svg class="i12" viewBox="0 0 12 12"><path d="M.5.5h11v8h-4l-2 2v-2h-5zM3 3h6M3 5.500h6" fill="none" stroke="#fff"/></svg>
  </div>
</footer>
</body>
</html>
```
FILE: styles.css
```css
* { box-sizing: border-box; }
body { margin: 0; height: 100vh; display: flex; flex-direction: column; overflow: hidden; font-family: "Open Sans", "Noto Sans", sans-serif; font-size: 9px; color: #444; background: #fff; }
button { font: inherit; color: inherit; background: none; border: 0; padding: 0; }
input { font: inherit; color: inherit; background: none; border: 0; padding: 0; min-width: 0; outline: 0; }
svg { display: block; flex: none; overflow: visible; }
.defs { position: absolute; width: 0; height: 0; }
.i8 { width: 8px; height: 8px; }
.i10 { width: 10px; height: 10px; }
.i12 { width: 12px; height: 12px; }
.i16 { width: 16px; height: 16px; }
.i20 { width: 20px; height: 20px; }
.plain { display: flex; align-items: center; justify-content: center; }
.desktop { flex: 1; min-height: 0; display: flex; }

/* browser window */
.browser { flex: 605 1 0; min-width: 0; display: flex; flex-direction: column; border-right: 4px solid #a9a9a9; border-bottom: 3px solid #b4b4b4; background: #fff; }
.tabs { display: flex; height: 27px; padding: 5px 0 0 2px; background: #e5e5e5; border-top: 1px solid #b9b2b5; }
.tab { display: flex; align-items: center; width: 159px; padding: 0 7px; gap: 6px; border-right: 1px solid #d0d0d0; }
.tab-on { background: #f9f9f9; border-radius: 4px 4px 0 0; }
.tab-title { flex: 1; font-size: 8px; white-space: nowrap; color: #555; }
.tab .plain { color: #333; }
.newtab { width: 22px; }
.winbtns { margin-left: auto; display: flex; align-items: flex-start; gap: 22px; padding-right: 11px; color: #888; }
.address { display: flex; align-items: center; height: 26px; background: #f9f9f9; border-bottom: 1px solid #e6e6e6; }
.nav { display: flex; gap: 17px; padding: 0 13px 0 10px; }
.urlbox { flex: 1; min-width: 0; display: flex; align-items: center; height: 20px; background: #fff; padding: 0 7px 0 8px; gap: 5px; font-size: 10px; color: #666; }
.urlbox label { padding-right: 8px; border-right: 1px solid #999; line-height: 10px; }
.urlbox input { flex: 1; padding-left: 3px; color: #333; }
.star { margin-left: 8px; }
.extras { display: flex; align-items: center; gap: 17px; padding: 0 12px 0 13px; }
.rule { border-left: 1px solid #ddd; padding-left: 13px; height: 12px; }

.viewer { flex: 1; min-height: 0; display: flex; }
.page { flex: 1; min-width: 0; position: relative; overflow: hidden; display: flex; flex-direction: column; font-family: "Liberation Serif", serif; font-size: 17px; line-height: 20px; color: #222; white-space: nowrap; }
.page p { margin: 0; }
.row { display: flex; align-items: center; padding-left: 75px; flex: none; }
.first { height: 42px; margin-top: -26px; }
.put { height: 46px; }
.there { height: 34px; }
.sinrow { height: 50px; margin-top: 19px; padding-left: 288px; }
.subst { height: 30px; }
.result { height: 52px; }
.lead { width: 198px; }
.eq-start { width: 34px; }
.eq { width: 17px; }
sup, sub { font-size: 12px; line-height: 0; }
.int { width: 10px; height: 28px; margin-right: 2px; }
.second { margin-left: 14px; }
.op { margin: 0 4px; }
.first-op { margin-left: 0; }
.by { margin-left: auto; }
.dots { margin-left: auto; padding-right: 4px; }
.frac { display: inline-grid; grid-template-rows: 1fr 1fr; text-align: center; }
.num { align-self: end; padding: 0 2px; border-bottom: 1px solid #222; }
.den { padding: 4px 2px 0; }
.rad { display: inline-flex; margin-top: -2px; }
.solo { margin-top: 0; }
.root { width: 10px; height: 24px; }
.radicand { border-top: 1px solid #222; padding: 4px 2px 0 0; }
.exercise { align-self: flex-start; margin: 21px 0 5px 257px; height: 26px; padding: 0 4px; border: 2px solid #4bbcd6; background: #c6ebf8; color: #1ea9cc; font-size: 18px; line-height: 23px; flex: none; }
.page .instruct { padding-left: 61px; height: 28px; line-height: 28px; flex: none; }
.problems { list-style: none; margin: 0; padding: 0 0 0 47px; display: grid; grid-template-columns: 177px 168px 1fr; grid-template-rows: 58px 84px 42px; flex: none; }
.problems li { display: flex; align-items: center; position: relative; }
.problems b { width: 26px; flex: none; color: #1ea9cc; padding-top: 4px; }
.problems li:nth-child(3n+1) b { width: 30px; }
.tick { position: absolute; left: -8px; top: 16px; width: 24px; height: 26px; }
.far { left: -12px; }
.folio { margin-top: auto; margin-bottom: 11px; padding-left: 54px; text-align: center; font: 13px/16px "Liberation Sans", sans-serif; }
.watermark { position: absolute; left: 0; top: 0; width: 590px; height: 628px; mix-blend-mode: multiply; pointer-events: none; fill: #e4e4e4; font-family: "Liberation Sans", sans-serif; }
.vbar { width: 11px; background: #f0f0f0; display: flex; flex-direction: column; align-items: center; padding: 3px 0; color: #333; }
.vtrack { flex: 1; padding-top: 236px; }
.vthumb { display: block; width: 9px; height: 12px; background: #c1c1c1; }
.hbar { display: flex; align-items: center; height: 9px; background: #f0f0f0; padding-right: 13px; color: #333; }
.htrack { flex: 1; padding: 0 96px 0 52px; }
.hthumb { display: block; height: 8px; background: #c1c1c1; }

/* note window */
.note { flex: 675 1 0; min-width: 0; display: flex; flex-direction: column; border-left: 1px solid #a673a5; border-right: 3px solid #b39ab5; background: #fff; }
.title { position: relative; height: 43px; display: flex; flex-wrap: wrap; background: #7a2b78; color: #fff; flex: none; font-size: 8px; }
.deco { position: absolute; right: 0; top: 0; width: 320px; height: 43px; overflow: hidden; }
.title > div, .title > h1 { height: 23px; display: flex; align-items: center; position: relative; }
.quick { width: 60px; padding-left: 12px; gap: 8px; }
.title h1 { margin: 0; flex: 1; justify-content: flex-end; font-size: 8px; font-weight: 400; white-space: pre; padding-right: 92px; }
.account { gap: 8px; padding-right: 18px; }
.initials { width: 16px; height: 16px; line-height: 16px; border-radius: 50%; background: #ddd6dd; color: #777; font-size: 7px; text-align: center; }
.controls { gap: 22px; padding-right: 11px; }
.menu { position: relative; width: 100%; height: 20px; display: flex; padding-left: 2px; }
.menu button { padding: 0 9px; }
.menu button:first-child { padding: 0 12px 0 10px; }
.menu .on { background: #f3f3f3; color: #7a2b78; padding: 0 8px; }
.ribbon { height: 62px; display: flex; background: #f3f3f3; border-bottom: 1px solid #ddd; flex: none; position: relative; color: #333; }
.group { display: flex; flex-direction: column; border-right: 1px solid #ccc; margin: 4px 0 0; flex: none; }
.items { flex: 1; display: flex; align-items: flex-start; }
.caption { text-align: center; line-height: 12px; font-size: 8px; }
.tools { width: 425px; padding-left: 4px; }
.shapes { width: 91px; padding-left: 6px; }
.edit { width: 61px; padding-left: 2px; }
.convert { width: 67px; padding-left: 5px; }
.big { display: flex; flex-direction: column; align-items: center; font-size: 8px; line-height: 10px; white-space: nowrap; flex: none; }
.big > .i20 { margin-bottom: 4px; }
.w28 { width: 28px; }
.w34 { width: 32px; }
.w38 { width: 38px; }
.gallery { display: flex; height: 42px; border: 1px solid #c6c6c6; background: #fff; margin-left: 2px; flex: none; }
.pens { display: grid; grid-template-columns: repeat(7, 32px); gap: 4px 3px; padding: 2px; }
.pen { height: 16px; border: 1px solid #aaa; overflow: hidden; background: #fff; }
.pen svg { width: 30px; height: 14px; }
.picked { outline: 2px solid #bdbdbd; }
.pale { color: #e2b9d5; }
.pink { color: #f59ac6; }
.cyan { color: #1fd0ee; }
.yellow { color: #ffff00; }
.red { color: #d0021b; }
.blue { color: #2f5cab; }
.green { color: #00f010; }
.spin { width: 10px; display: flex; flex-direction: column; border-left: 1px solid #c6c6c6; }
.spin button { flex: 1; display: flex; align-items: center; justify-content: center; }
.spin button + button { border-top: 1px solid #c6c6c6; }
.spin button:disabled { background: #e1e1e1; color: #aaa; }
.shapebox { display: flex; width: 78px; height: 42px; border: 1px solid #c6c6c6; background: #fff; }
.shapebox > svg { width: 67px; height: 40px; }
.mini { display: flex; flex-direction: column; gap: 3px; padding-left: 3px; }
.mini svg { height: 12px; }
.glyph { position: relative; height: 24px; font: 20px/26px "Open Sans", sans-serif; color: #666; }
.glyph small { font-size: 13px; vertical-align: 4px; }
.glyph svg { position: absolute; left: 5px; top: 0; width: 12px; height: 6px; }
.collapse { margin: auto 5px 2px auto; }
.sections { display: flex; align-items: flex-end; height: 29px; border-bottom: 3px solid #cf9fd1; padding-left: 8px; flex: none; background: #fff; }
.book { display: flex; align-items: center; gap: 4px; height: 22px; font-size: 13px; width: 55px; }
.sec { background: #cf9fd1; width: 73px; height: 19px; border-radius: 4px 6px 0 0; font-size: 8px; color: #5e3560; margin-right: 1px; }
.addsec { width: 23px; height: 14px; border: 1px solid #ccc; border-bottom: 0; border-radius: 3px 5px 0 0; display: flex; align-items: center; justify-content: center; }
.search { margin: 0 4px 4px auto; width: 128px; height: 14px; border: 1px solid #aaa; display: flex; align-items: center; gap: 4px; padding: 0 2px; font-size: 8px; }
.search input { flex: 1; }
.search input::placeholder { color: #666; opacity: 1; }
.work { flex: 1; min-height: 0; display: grid; grid-template-columns: 1fr 12px 49px; grid-template-rows: 1fr 10px; }
.sheet { min-width: 0; min-height: 0; overflow: clip; overflow-clip-margin: 4px; }
.ink { width: 100%; height: 100%; overflow: visible; }
.ink g path { fill: none; stroke: #2a55a5; stroke-width: 1.800px; stroke-linecap: round; stroke-linejoin: round; vector-effect: non-scaling-stroke; }
.expand { fill: none; stroke: #444; }
.nvbar { display: flex; flex-direction: column; padding-top: 26px; }
.nvtrack { flex: 1; width: 10px; background: #f2f2f2; padding-top: 174px; display: flex; }
.nvthumb { flex: 1; border: 1px solid #ccc; background: #fff; margin-bottom: 37px; }
.boxed { border: 1px solid #bbb; background: #fff; color: #333; }
.pages { grid-row: span 2; background: #f0e2f3; display: flex; flex-direction: column; overflow: hidden; font-size: 8px; }
.addpage { display: flex; align-items: center; gap: 4px; height: 18px; padding-left: 7px; background: #cf9fd1; white-space: nowrap; color: #666; margin-bottom: 7px; }
.pages a { color: #444; text-decoration: none; height: 15px; line-height: 15px; padding-left: 9px; margin-right: 4px; white-space: nowrap; }
.pages .current { background: #fff; }
.nhbar { grid-column: 1 / 3; display: flex; padding: 0 12px 0 1px; background: #f4f4f4; }
.nhthumb { flex: 1; border: 1px solid #bbb; background: #fff; margin-right: 32px; }

/* taskbar */
.taskbar { height: 27px; display: flex; flex: none; background: #222325; color: #fff; }
.slot { width: 32px; flex: 0 1 32px; display: flex; align-items: center; justify-content: center; border-bottom: 2px solid transparent; }
.open { border-bottom-color: #72c6c0; background-clip: padding-box; }
.active { background: #4b4a4d; }
.find { width: 230px; background: #f1f1f1; color: #555; display: flex; align-items: center; gap: 8px; padding-left: 7px; font-size: 9px; }
.find input { flex: 1; }
.find input::placeholder { color: #555; opacity: 1; }
.ltr { font: 700 6px "Open Sans", sans-serif; fill: #fff; }
.tray { margin-left: auto; display: flex; align-items: center; gap: 5px; padding-right: 16px; font-size: 8px; }
.tray .i12:first-child { margin-right: 7px; }
.gap { margin-left: 3px; }
.clock { text-align: center; line-height: 12px; margin: 0 8px 0 3px; }
```
